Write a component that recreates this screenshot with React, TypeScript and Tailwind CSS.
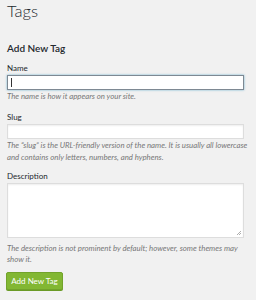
import React from 'react';

const App: React.FC = () => {
  return (
    <div className="w-[256px] h-[300px] bg-[#f1f1f1] overflow-hidden text-[#444] pl-[7px] pr-[5px]" style={{ fontFamily: 'Lato, "Open Sans", sans-serif' }}>
      <h1 className="pt-[1px] text-[16.5px] leading-[20px] text-[#23282d] font-light">Tags</h1>

      <h2 className="mt-[21px] text-[10px] leading-[12px] font-semibold text-[#23282d]">Add New Tag</h2>

      <div className="mt-[9px]">
        <label className="block text-[8px] leading-[11px] text-[#23282d]">Name</label>
        <div className="mt-[1px] h-[15px] w-[237px] bg-white border border-[#7e8993] shadow-[0_0_2px_rgba(30,140,190,0.6)] flex items-center pl-[3px]">
          <span className="w-px h-[9px] bg-[#333]" />
        </div>
        <p className="mt-[1px] text-[7.8px] leading-[11px] italic text-[#777]">The name is how it appears on your site.</p>
      </div>

      <div className="mt-[10px]">
        <label className="block text-[8px] leading-[11px] text-[#23282d]">Slug</label>
        <div className="mt-[1px] h-[15px] w-[237px] bg-white border border-[#ddd] shadow-[inset_0_1px_2px_rgba(0,0,0,0.07)]" />
        <p className="text-[7.8px] leading-[12px] italic text-[#777]">
          The “slug” is the URL-friendly version of the name. It is usually all lowercase and contains only letters, numbers, and hyphens.
        </p>
      </div>

      <div className="mt-[8px]">
        <label className="block text-[8px] leading-[11px] text-[#23282d]">Description</label>
        <div className="relative mt-[1px] h-[55px] w-[237px] bg-white border border-[#ddd] shadow-[inset_0_1px_2px_rgba(0,0,0,0.07)]">
          <svg className="absolute right-[1px] bottom-[1px]" width="6" height="6" viewBox="0 0 6 6">
            <path d="M5 1 L1 5 M5 3 L3 5" stroke="#999" strokeWidth="0.8" />
          </svg>
        </div>
        <p className="mt-[5px] text-[7.8px] leading-[11px] italic text-[#777]">
          The description is not prominent by default; however, some themes may show it.
        </p>
      </div>

      <button className="mt-[7px] ml-[-1px] h-[18px] w-[57px] bg-[#82b733] border border-[#72a32b] rounded-[2px] text-white text-[8px] leading-[16px] shadow-[0_1px_0_#6a9a26]">
        Add New Tag
      </button>
    </div>
  );
};

export default App;
